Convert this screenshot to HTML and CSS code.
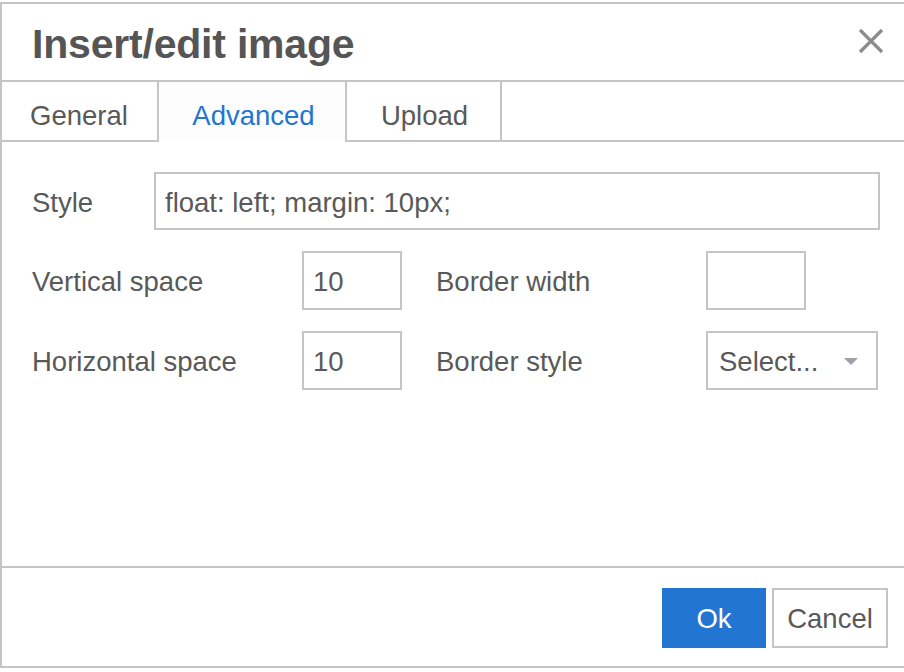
FILE: index.html
```html
<!DOCTYPE html>
<html lang="en">
<head>
  <meta charset="UTF-8" />
  <title>Insert/edit image</title>
  <link rel="stylesheet" href="styles.css">
</head>
<body>
  <div class="dialog">
    <div class="head">
      <h1>Insert/edit image</h1>
      <button class="close" aria-label="Close">
        <svg width="26" height="26" viewBox="0 0 26 26"><path d="M2 2 L24 24 M24 2 L2 24" stroke="#8c8c8c" stroke-width="3.2" fill="none"/></svg>
      </button>
    </div>

    <div class="tabs">
      <div class="tab tab-general">General</div>
      <div class="tab tab-advanced active">Advanced</div>
      <div class="tab tab-upload">Upload</div>
    </div>

    <div class="panel">
      <div class="row">
        <label class="lbl lbl-short" for="style">Style</label>
        <input class="field wide" id="style" type="text" value="float: left; margin: 10px;" />
      </div>
      <div class="row">
        <label class="lbl" for="vspace">Vertical space</label>
        <input class="field small" id="vspace" type="text" value="10" />
        <label class="lbl lbl-right" for="bwidth">Border width</label>
        <input class="field small" id="bwidth" type="text" value="" />
      </div>
      <div class="row">
        <label class="lbl" for="hspace">Horizontal space</label>
        <input class="field small" id="hspace" type="text" value="10" />
        <label class="lbl lbl-right">Border style</label>
        <div class="field select">Select...<span class="caret"></span></div>
      </div>
    </div>

    <div class="foot">
      <button class="btn primary">Ok</button>
      <button class="btn cancel">Cancel</button>
    </div>
  </div>
</body>
</html>
```

FILE: styles.css
```css
* {
  box-sizing: border-box;
}
body {
  margin: 0;
  background: #fff;
  font-family: "Liberation Sans", Arial, sans-serif;
  color: #595959;
  overflow: hidden;
}
.dialog {
  margin-top: 2px;
  width: 904px;
  border: 2px solid #c5c5c5;
  border-right: none;
  background: #fff;
  box-shadow: 0 2px 3px rgba(0,0,0,0.12);
}
.head {
  height: 78px;
  border-bottom: 2px solid #c5c5c5;
  display: flex;
  align-items: center;
  justify-content: space-between;
  padding: 4px 20px 0 30px;
}
h1 {
  margin: 0;
  font-size: 41px;
  font-weight: bold;
  color: #555;
  letter-spacing: -0.2px;
}
.close {
  border: none;
  background: none;
  padding: 0;
  width: 26px;
  height: 26px;
  margin-top: -6px;
}
.tabs {
  display: flex;
  height: 60px;
  border-bottom: 2px solid #c5c5c5;
}
.tab {
  font-size: 27.5px;
  line-height: 58px;
  padding-top: 5px;
  text-align: center;
  border-right: 2px solid #c5c5c5;
}
.tab-general {
  width: 157px;
  padding-right: 1px;
}
.tab-advanced {
  width: 188px;
  padding-left: 3px;
}
.tab-upload {
  width: 155px;
  padding-left: 2px;
}
.tab.active {
  color: #2276d2;
  background: #fdfdfd;
  height: 60px;
  margin-bottom: -2px;
}
.panel {
  height: 424px;
  padding: 30px 24px 0 30px;
  display: flex;
  flex-direction: column;
  gap: 21px;
}
.row {
  display: flex;
  align-items: center;
}
.row:first-child .field {
  height: 58px;
}
.lbl {
  width: 270px;
  font-size: 27.5px;
  padding-top: 3px;
}
.lbl-short {
  width: 122px;
}
.lbl-right {
  width: 270px;
  margin-left: 34px;
}
.field {
  height: 59px;
  border: 2px solid #c5c5c5;
  font-family: inherit;
  font-size: 27.5px;
  color: #595959;
  padding: 3px 9px 0;
  outline: none;
}
.wide {
  flex: 1;
}
.small {
  width: 100px;
}
.select {
  width: 172px;
  display: flex;
  align-items: center;
  justify-content: space-between;
  padding: 2px 18px 0 11px;
}
.caret {
  width: 0;
  height: 0;
  border-left: 7px solid transparent;
  border-right: 7px solid transparent;
  border-top: 7px solid #9aa1a9;
}
.foot {
  height: 100px;
  border-top: 2px solid #c5c5c5;
  display: flex;
  justify-content: flex-end;
  align-items: flex-start;
  gap: 6px;
  padding: 20px 16px 0 0;
}
.btn {
  height: 60px;
  padding: 2px 0 0;
  font-family: inherit;
  font-size: 27.5px;
  color: #595959;
  background: #fff;
  border: 2px solid #c5c5c5;
}
.btn.primary {
  width: 104px;
  background: #2276d2;
  border-color: #2276d2;
  color: #fff;
}
.btn.cancel {
  width: 116px;
}
```
